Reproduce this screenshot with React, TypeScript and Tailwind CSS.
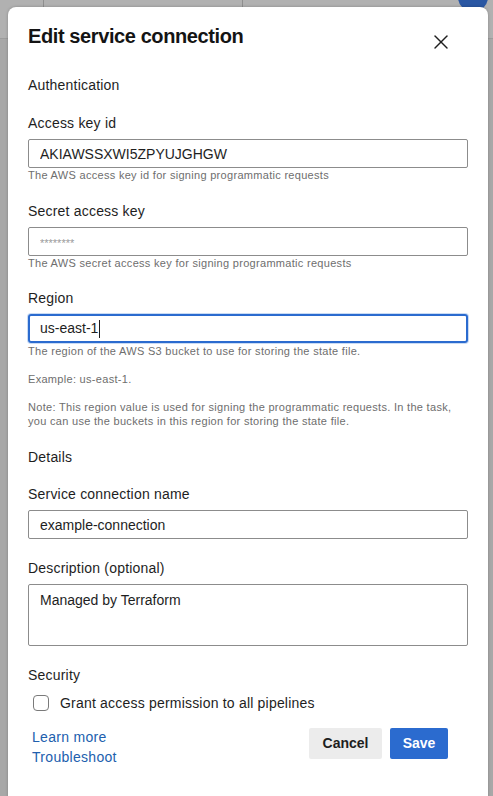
import { X } from "lucide-react";

const font = { fontFamily: '"Liberation Sans", Arial, sans-serif' };

function Label({ children, className = "" }: { children: React.ReactNode; className?: string }) {
    return (
        <div className={`text-[14px] leading-[20px] tracking-[0.2px] text-[#1e1e1e] ${className}`}>{children}</div>
    );
}

function Help({ children, className = "" }: { children: React.ReactNode; className?: string }) {
    return <p className={`text-[11px] leading-[14px] tracking-[0.3px] text-[#6e6e6e] ${className}`}>{children}</p>;
}

function TextField({ value, placeholder }: { value?: string; placeholder?: string }) {
    return (
        <input
            readOnly
            defaultValue={value}
            placeholder={placeholder}
            className="mt-[6px] block h-[29px] w-full rounded-[2px] border border-[#8c8c8c] bg-white px-[11px] text-[14px] text-[#1e1e1e] outline-none placeholder:text-[11px] placeholder:text-[#9b9b9b]"
            style={font}
        />
    );
}

export default function App() {
    return (
        <div className="relative h-[796px] w-[493px] overflow-hidden bg-[#a8a8a8]" style={font}>
            {/* page behind the overlay */}
            <div className="flex h-[39px] border-b border-[#9c9c9c] bg-[#b1b1b1]">
                <div className="w-[44px] border-r border-[#8f8f8f]" />
                <div className="w-[199px] border-r border-[#8f8f8f]" />
                <div className="flex-1" />
            </div>
            <div className="absolute -top-[18px] left-[458px] h-[30px] w-[30px] rounded-full bg-[#2a57a3]" />

            {/* dialog */}
            <div className="absolute left-[8px] top-[7px] h-[820px] w-[480px] rounded-lg bg-white px-[20px] pt-[15px] shadow-[0_0_3px_rgba(0,0,0,0.25)]">
                <div className="flex h-[28px] items-start justify-between pr-[15px]">
                    <h1 className="text-[20px] font-bold leading-[28px] tracking-[-0.4px] text-[#141414]">
                        Edit service connection
                    </h1>
                    <button className="mt-[8px] text-[#1e1e1e]">
                        <X className="h-[24px] w-[24px]" strokeWidth={1.4} />
                    </button>
                </div>

                <Label className="mt-[25px]">Authentication</Label>

                <Label className="mt-[18px]">Access key id</Label>
                <TextField value="AKIAWSSXWI5ZPYUJGHGW" />
                <Help>The AWS access key id for signing programmatic requests</Help>

                <Label className="mt-[19px]">Secret access key</Label>
                <TextField placeholder="********" />
                <Help>The AWS secret access key for signing programmatic requests</Help>

                <Label className="mt-[18px]">Region</Label>
                <div className="mt-[6px] flex h-[29px] w-full items-center rounded-[3px] border-2 border-[#2b6bcf] px-[10px] text-[14px] text-[#1e1e1e] shadow-[0_0_0_1px_#c9dbf4]">
                    us-east-1
                    <span className="ml-[1px] h-[18px] w-[1px] bg-[#1e1e1e]" />
                </div>
                <div className="mt-[1px]">
                    <Help>The region of the AWS S3 bucket to use for storing the state file.</Help>
                    <Help className="mt-[14px]">Example: us-east-1.</Help>
                    <Help className="mt-[14px]">
                        Note: This region value is used for signing the programmatic requests. In the task, you can
                        use the buckets in this region for storing the state file.
                    </Help>
                </div>

                <Label className="mt-[19px]">Details</Label>

                <Label className="mt-[17px]">Service connection name</Label>
                <TextField value="example-connection" />

                <Label className="mt-[19px]">Description (optional)</Label>
                <textarea
                    readOnly
                    defaultValue="Managed by Terraform"
                    className="mt-[6px] block h-[62px] w-full resize-none rounded-[2px] border border-[#8c8c8c] px-[11px] pt-[5px] text-[14px] leading-[20px] text-[#1e1e1e] outline-none"
                    style={font}
                />

                <Label className="mt-[19px]">Security</Label>
                <label className="mt-[8px] flex h-[20px] items-center pl-[5px]">
                    <span className="h-[16px] w-[16px] rounded-[4px] border border-[#7a7a7a] bg-white" />
                    <span className="ml-[11px] text-[14px] tracking-[0.2px] text-[#1e1e1e]">
                        Grant access permission to all pipelines
                    </span>
                </label>

                <div className="mt-[14px] flex items-start justify-between pr-[20px]">
                    <div className="flex flex-col pl-[4px] text-[14px] leading-[20px] tracking-[0.3px] text-[#2160ae]">
                        <a href="#">Learn more</a>
                        <a href="#">Troubleshoot</a>
                    </div>
                    <div className="mt-[1px] flex gap-[8px]">
                        <button className="h-[31px] w-[73px] rounded-[2px] bg-[#ececec] text-[14px] font-bold text-[#1e1e1e]">
                            Cancel
                        </button>
                        <button className="h-[31px] w-[58px] rounded-[2px] bg-[#2b6bcf] text-[14px] font-bold text-white">
                            Save
                        </button>
                    </div>
                </div>
            </div>
        </div>
    );
}
